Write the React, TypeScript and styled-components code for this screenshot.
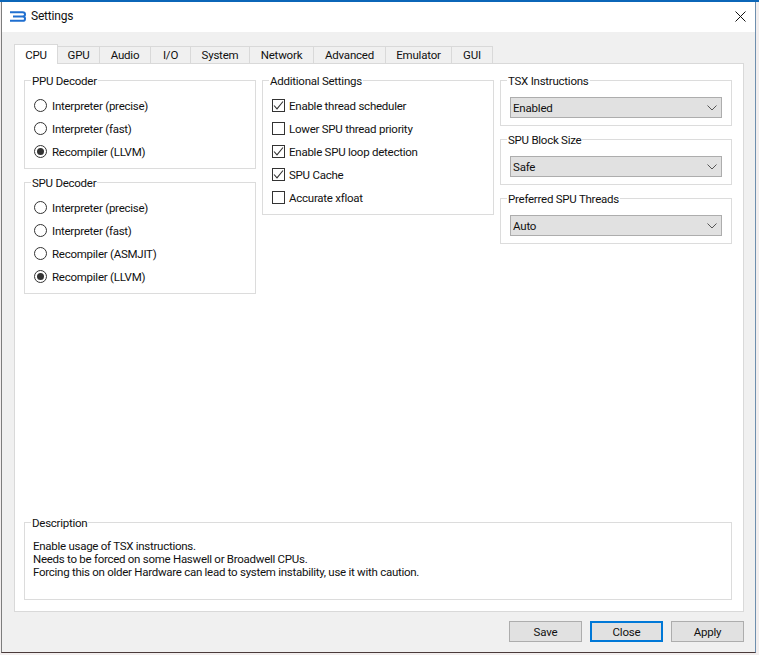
import * as React from "react";
import styled, { createGlobalStyle } from "styled-components";

const tabs = [
  { label: "CPU", width: 44 },
  { label: "GPU", width: 42 },
  { label: "Audio", width: 51 },
  { label: "I/O", width: 40 },
  { label: "System", width: 59 },
  { label: "Network", width: 64 },
  { label: "Advanced", width: 72 },
  { label: "Emulator", width: 66 },
  { label: "GUI", width: 41 },
];

export default function App() {
  return (
    <Page>
      <GlobalStyle />
      <Window>
        <TitleBar>
          <AppIcon viewBox="0 0 16 11" aria-hidden="true">
            <path d="M0 1.2H12.5Q15 1.2 15 3.2V3.6Q15 5.5 12.5 5.5H3M12.5 5.5Q15 5.5 15 7.5V7.9Q15 9.8 12.5 9.8H0" fill="none" stroke="#1f6fd0" strokeWidth="2" />
          </AppIcon>
          <Title>Settings</Title>
          <CloseIcon viewBox="0 0 11 11" aria-hidden="true">
            <path d="M0.5 0.5L10.5 10.5M10.5 0.5L0.5 10.5" stroke="#111" strokeWidth="1" fill="none" />
          </CloseIcon>
        </TitleBar>
        <Body>
          <TabBar>
            {tabs.map((tab, i) => (
              <Tab key={tab.label} $active={i === 0} $width={tab.width}>
                {tab.label}
              </Tab>
            ))}
          </TabBar>
          <Pane>
            <Columns>
              <Column>
                <Group>
                  <Legend>PPU Decoder</Legend>
                  <Radio label="Interpreter (precise)" />
                  <Radio label="Interpreter (fast)" />
                  <Radio label="Recompiler (LLVM)" checked />
                </Group>
                <Group>
                  <Legend>SPU Decoder</Legend>
                  <Radio label="Interpreter (precise)" />
                  <Radio label="Interpreter (fast)" />
                  <Radio label="Recompiler (ASMJIT)" />
                  <Radio label="Recompiler (LLVM)" checked />
                </Group>
              </Column>
              <Column>
                <Group>
                  <Legend>Additional Settings</Legend>
                  <Check label="Enable thread scheduler" checked />
                  <Check label="Lower SPU thread priority" />
                  <Check label="Enable SPU loop detection" checked />
                  <Check label="SPU Cache" checked />
                  <Check label="Accurate xfloat" />
                </Group>
              </Column>
              <Column>
                <Group>
                  <Legend>TSX Instructions</Legend>
                  <Select value="Enabled" />
                </Group>
                <Group>
                  <Legend>SPU Block Size</Legend>
                  <Select value="Safe" />
                </Group>
                <Group>
                  <Legend>Preferred SPU Threads</Legend>
                  <Select value="Auto" />
                </Group>
              </Column>
            </Columns>
            <DescriptionGroup>
              <Legend>Description</Legend>
              <DescriptionText>
                Enable usage of TSX instructions.
                <br />
                Needs to be forced on some Haswell or Broadwell CPUs.
                <br />
                Forcing this on older Hardware can lead to system instability, use it with caution.
              </DescriptionText>
            </DescriptionGroup>
          </Pane>
          <Footer>
            <Button>Save</Button>
            <Button $primary>Close</Button>
            <Button>Apply</Button>
          </Footer>
        </Body>
      </Window>
    </Page>
  );
}

const Radio = ({ label, checked }: { label: string; checked?: boolean }) => (
  <OptionRow>
    <RadioMark $checked={checked} />
    {label}
  </OptionRow>
);

const Check = ({ label, checked }: { label: string; checked?: boolean }) => (
  <OptionRow>
    <CheckMark>
      {checked && (
        <svg viewBox="0 0 11 11" width="11" height="11" aria-hidden="true">
          <path d="M1 5.5L4 8.8L10 1.5" fill="none" stroke="#333" strokeWidth="1.1" />
        </svg>
      )}
    </CheckMark>
    {label}
  </OptionRow>
);

const Select = ({ value }: { value: string }) => (
  <SelectBox>
    {value}
    <svg viewBox="0 0 10 6" width="10" height="6" aria-hidden="true">
      <path d="M0.5 0.5L5 5L9.5 0.5" fill="none" stroke="#555" strokeWidth="1" />
    </svg>
  </SelectBox>
);

const GlobalStyle = createGlobalStyle`
  html, body {
    margin: 0;
    padding: 0;
    background: #f2eeee;
  }
  * {
    box-sizing: border-box;
  }
`;

const Page = styled.div`
  width: 759px;
  height: 655px;
  overflow: hidden;
  padding: 2px 3px 0 1px;
  background: linear-gradient(#0b66b8 0 2px, #f2eeee 2px);
  font-family: Roboto, "Noto Sans", sans-serif;
  font-size: 11.5px;
  letter-spacing: -0.2px;
  color: #111;
`;

const Window = styled.div`
  height: 651px;
  display: flex;
  flex-direction: column;
  border-left: 1px solid #7d7d7d;
  border-right: 1px solid #6f8fae;
  border-bottom: 1px solid #4a3a3a;
`;

const TitleBar = styled.div`
  height: 30px;
  flex: none;
  display: flex;
  align-items: center;
  padding: 0 9px 2px 8px;
  background: #fff;
`;

const AppIcon = styled.svg`
  width: 16px;
  height: 11px;
  margin-right: 5px;
`;

const Title = styled.span`
  flex: 1;
  font-size: 12px;
`;

const CloseIcon = styled.svg`
  width: 11px;
  height: 11px;
`;

const Body = styled.div`
  flex: 1;
  display: flex;
  flex-direction: column;
  min-height: 0;
  padding: 12px 11px 0 12px;
  background: #f0f0f0;
`;

const TabBar = styled.div`
  height: 20px;
  flex: none;
  display: flex;
  align-items: flex-end;
  position: relative;
  z-index: 1;
  margin-bottom: -1px;
`;

const Tab = styled.div<{ $active?: boolean; $width: number }>`
  width: ${({ $width }) => $width}px;
  height: ${({ $active }) => ($active ? 20 : 18)}px;
  display: flex;
  align-items: center;
  justify-content: center;
  background: ${({ $active }) => ($active ? "#fff" : "#f0f0f0")};
  border: 1px solid #d9d9d9;
  border-left: ${({ $active }) => ($active ? "1px solid #d9d9d9" : "none")};
  border-bottom: ${({ $active }) => ($active ? "none" : "1px solid #d9d9d9")};
`;

const Pane = styled.div`
  height: 549px;
  flex: none;
  display: flex;
  flex-direction: column;
  justify-content: space-between;
  padding: 7px 11px 11px 9px;
  background: #fff;
  border: 1px solid #d9d9d9;
`;

const Columns = styled.div`
  display: grid;
  grid-template-columns: repeat(3, 232px);
  gap: 6px;
  align-items: start;
`;

const Column = styled.div`
  display: flex;
  flex-direction: column;
  gap: 4px;
`;

const Group = styled.fieldset`
  margin: 0;
  min-width: 0;
  padding: 5px 9px 5px;
  border: 1px solid #dcdcdc;
`;

const Legend = styled.legend`
  margin-left: -3px;
  padding: 2px 1px 0;
  line-height: 16px;
  font-size: 11.5px;
  letter-spacing: -0.25px;
`;

const OptionRow = styled.div`
  height: 23px;
  display: flex;
  align-items: center;
  letter-spacing: -0.25px;
`;

const RadioMark = styled.span<{ $checked?: boolean }>`
  width: 13px;
  height: 13px;
  flex: none;
  display: flex;
  align-items: center;
  justify-content: center;
  margin-right: 5px;
  border: 1px solid #333;
  border-radius: 50%;

  &::after {
    content: "";
    display: ${({ $checked }) => ($checked ? "block" : "none")};
    width: 7px;
    height: 7px;
    border-radius: 50%;
    background: #333;
  }
`;

const CheckMark = styled.span`
  width: 13px;
  height: 13px;
  flex: none;
  display: flex;
  margin-right: 4px;
  border: 1px solid #333;
`;

const SelectBox = styled.div`
  height: 21px;
  display: flex;
  align-items: center;
  justify-content: space-between;
  margin: 3px 0 2px;
  padding: 0 4px 0 2px;
  background: #e1e1e1;
  border: 1px solid #adadad;
`;

const DescriptionGroup = styled(Group)`
  height: 87px;
  padding: 6px 9px 0;
`;

const DescriptionText = styled.div`
  line-height: 13px;
  margin: 3px 0 0 -1px;
  letter-spacing: -0.27px;
`;

const Footer = styled.div`
  flex: 1;
  display: flex;
  justify-content: flex-end;
  gap: 8px;
  padding-top: 9px;
`;

const Button = styled.div<{ $primary?: boolean }>`
  width: 73px;
  height: 21px;
  display: flex;
  align-items: center;
  justify-content: center;
  background: #e1e1e1;
  border: ${({ $primary }) => ($primary ? "2px solid #0078d7" : "1px solid #adadad")};
`;
